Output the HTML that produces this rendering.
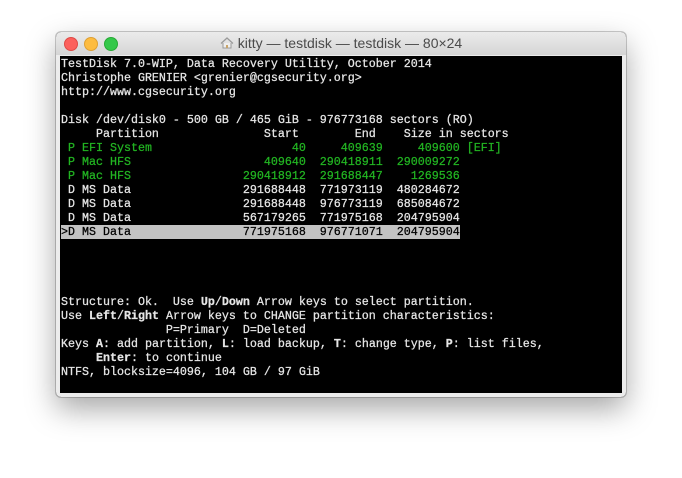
<!DOCTYPE html>
<html><head><style>
html,body{margin:0;padding:0;background:#fff;width:682px;height:478px;overflow:hidden}
.win{position:absolute;left:56px;top:32px;width:570px;height:365px;border-radius:5px;background:#000;box-shadow:0 12px 30px rgba(0,0,0,.35),0 0 0 1px rgba(0,0,0,.2);overflow:hidden}
.tb{position:absolute;left:0;top:0;width:570px;height:23px;background:linear-gradient(#ebebeb,#d5d5d5);border-bottom:1px solid #b0b0b0;font:14px "Liberation Sans",sans-serif;color:#4a4a4a;text-align:center;line-height:23px}
.dot{position:absolute;top:5px;width:12px;height:12px;border-radius:50%}
.term{position:absolute;left:4px;top:24px;width:562px;height:337px;background:#000}
pre{position:absolute;left:1px;top:1px;margin:0;font:11.67px/14px "Liberation Mono",monospace;color:#e6e6e6;white-space:pre;-webkit-text-stroke:0.25px}
.g{color:#22b422}
b{font-weight:bold}
.sel{background:#c3c3c3;color:#000}
.frame{position:absolute;left:0;top:23px;width:570px;height:342px;box-sizing:border-box;border:4px solid #ececec;border-top:1px solid #ececec;pointer-events:none}
</style></head><body>
<div class="win">
<div class="tb"><div class="dot" style="left:8px;background:#fc605c;border:0.5px solid #de4a45"></div><div class="dot" style="left:28px;background:#fdbc40;border:0.5px solid #dea033"></div><div class="dot" style="left:48px;background:#34c84a;border:0.5px solid #27aa35"></div><span style="display:inline-block;width:14px;height:12px;vertical-align:-1px;margin-right:4px"><svg width="14" height="12" viewBox="0 0 14 12"><path d="M1 6.5 L7 1 L13 6.5" fill="none" stroke="#999" stroke-width="1.2"/><path d="M3 6 V11 H11 V6" fill="#eee" stroke="#999"/><rect x="6" y="8" width="2" height="3" fill="#c9a46a"/></svg></span>kitty — testdisk — testdisk — 80×24</div>
<div class="term"><pre>TestDisk 7.0-WIP, Data Recovery Utility, October 2014
Christophe GRENIER &lt;grenier@cgsecurity.org&gt;
http://www.cgsecurity.org

Disk /dev/disk0 - 500 GB / 465 GiB - 976773168 sectors (RO)
     Partition               Start        End    Size in sectors
<span class="g"> P EFI System                    40     409639     409600 [EFI]</span>
<span class="g"> P Mac HFS                   409640  290418911  290009272</span>
<span class="g"> P Mac HFS                290418912  291688447    1269536</span>
 D MS Data                291688448  771973119  480284672
 D MS Data                291688448  976773119  685084672
 D MS Data                567179265  771975168  204795904
<span class="sel">&gt;D MS Data                771975168  976771071  204795904</span>




Structure: Ok.  Use <b>Up</b>/<b>Down</b> Arrow keys to select partition.
Use <b>Left</b>/<b>Right</b> Arrow keys to CHANGE partition characteristics:
               P=Primary  D=Deleted
Keys <b>A</b>: add partition, <b>L</b>: load backup, <b>T</b>: change type, <b>P</b>: list files,
     <b>Enter</b>: to continue
NTFS, blocksize=4096, 104 GB / 97 GiB</pre></div>
<div class="frame"></div>
</div>
</body></html>
